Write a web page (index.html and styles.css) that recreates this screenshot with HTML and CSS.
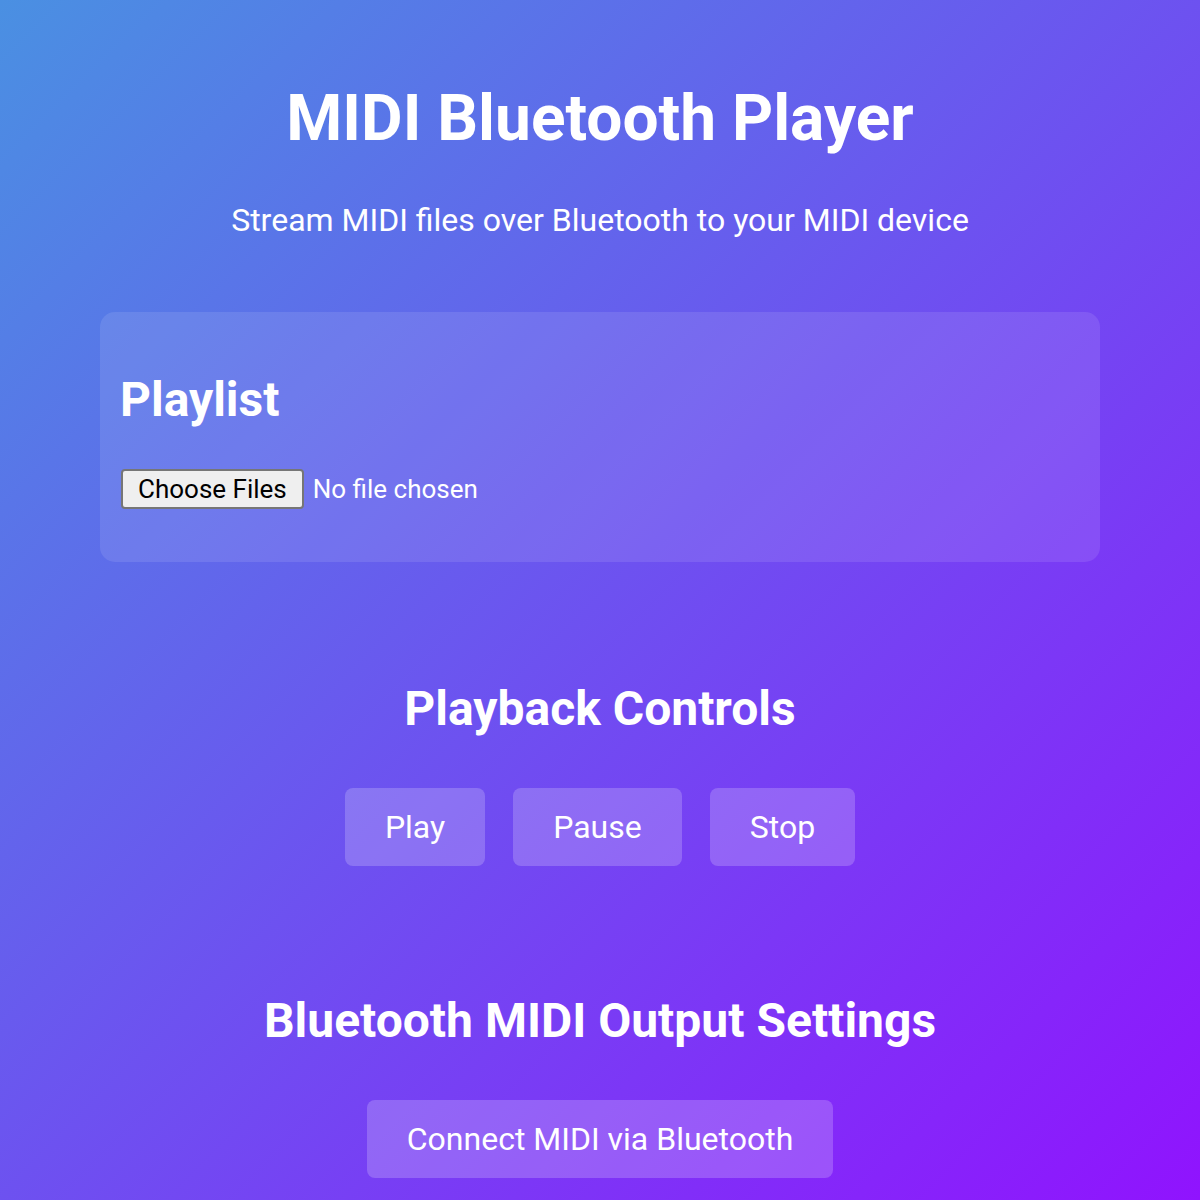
FILE: index.html
```html
<!DOCTYPE html>
<html lang="en">
<head>
<meta charset="utf-8">
<title>MIDI Bluetooth Player</title>
<link rel="stylesheet" href="styles.css">
</head>
<body>
<main class="app">
  <h1 class="title">MIDI Bluetooth Player</h1>
  <p class="subtitle">Stream MIDI files over Bluetooth to your MIDI device</p>

  <section class="card">
    <h2 class="card-title">Playlist</h2>
    <input class="file-input" type="file" multiple accept=".mid,.midi">
  </section>

  <section class="section section-controls">
    <h2 class="section-title">Playback Controls</h2>
    <div class="controls">
      <button class="btn">Play</button>
      <button class="btn">Pause</button>
      <button class="btn">Stop</button>
    </div>
  </section>

  <section class="section section-output">
    <h2 class="section-title">Bluetooth MIDI Output Settings</h2>
    <div class="controls controls-output">
      <button class="btn">Connect MIDI via Bluetooth</button>
    </div>
  </section>
</main>
</body>
</html>
```

FILE: styles.css
```css
html {
  min-height: 100%;
  background: linear-gradient(135deg, #4a90e2 0%, #9013fe 100%);
}

body {
  margin: 0;
  min-height: 100vh;
  font-family: Roboto, "Noto Sans", "Liberation Sans", sans-serif;
  color: #ffffff;
}

.app {
  max-width: 1000px;
  margin: 0 auto;
  padding-top: 81px;
  text-align: center;
}

.title {
  margin: 0;
  font-size: 64px;
  font-weight: 700;
  line-height: normal;
}

.subtitle {
  margin: 45px 0 73px;
  font-size: 32px;
  font-weight: 400;
  line-height: normal;
}

.card {
  background: rgba(255, 255, 255, 0.1);
  border-radius: 15px;
  padding: 59px 20px 53px;
  text-align: left;
}

.card-title {
  margin: 0 0 41px;
  font-size: 48px;
  font-weight: 700;
  line-height: normal;
}

.file-input {
  display: block;
  font-family: Roboto, "Noto Sans", "Liberation Sans", sans-serif;
  font-size: 26px;
  line-height: normal;
  color: #ffffff;
}

.file-input::file-selector-button {
  font-family: Roboto, "Noto Sans", "Liberation Sans", sans-serif;
  font-size: 26px;
  line-height: normal;
  color: #000000;
  background: #efefef;
  border: 2px solid #767676;
  border-radius: 4px;
  padding: 3px 15px;
  margin: 0 9px 0 1px;
}

.section-title {
  margin: 0;
  font-size: 48px;
  font-weight: 700;
  line-height: normal;
}

.section-controls {
  margin-top: 118px;
}

.section-output {
  margin-top: 126px;
}

.controls {
  display: flex;
  justify-content: center;
  gap: 28px;
  margin-top: 51px;
}

.btn {
  font-family: inherit;
  font-size: 32px;
  line-height: normal;
  color: #ffffff;
  background: rgba(255, 255, 255, 0.2);
  border: none;
  border-radius: 8px;
  padding: 20px 40px;
  cursor: pointer;
}
```
